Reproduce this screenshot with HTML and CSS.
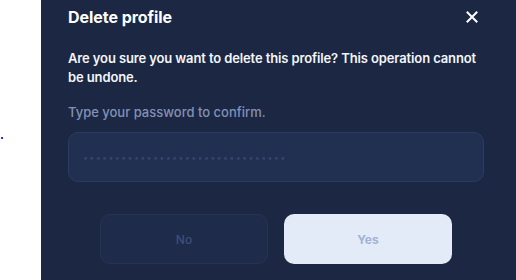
FILE: index.html
```html
<!DOCTYPE html>
<html lang="en">
<head>
<meta charset="utf-8">
<title>Delete profile</title>
<link rel="stylesheet" href="styles.css">
</head>
<body>
<div class="page">
  <div class="side"><span class="dot"></span></div>
  <div class="modal">
    <div class="content">
      <div class="header">
        <h2 class="title">Delete profile</h2>
        <button class="close" aria-label="Close">
          <svg width="12" height="12" viewBox="0 0 12 12"><path d="M1.5 1.5 L10.5 10.5 M10.5 1.5 L1.5 10.5" stroke="#fff" stroke-width="2" stroke-linecap="square"/></svg>
        </button>
      </div>
      <p class="message">Are you sure you want to delete this profile? This operation cannot be undone.</p>
      <p class="hint">Type your password to confirm.</p>
      <div class="input"><input type="password" value="••••••••••••••••••••••••••••••••" disabled></div>
      <div class="actions">
        <button class="btn btn-no">No</button>
        <button class="btn btn-yes">Yes</button>
      </div>
    </div>
  </div>
</div>
</body>
</html>
```

FILE: styles.css
```css
html, body {
  margin: 0;
  padding: 0;
  background: #ffffff;
}
.page {
  display: flex;
  width: 516px;
  height: 280px;
  overflow: hidden;
  font-family: Inter, "Noto Sans", sans-serif;
}
.side {
  width: 41px;
  flex: none;
  background: #ffffff;
  position: relative;
}
.dot {
  position: absolute;
  left: 1px;
  top: 137px;
  width: 2px;
  height: 2px;
  background: #2a2cff;
}
.modal {
  flex: 1;
  background: #1b2743;
}
.content {
  width: 416px;
  margin-left: 27px;
  padding-top: 6px;
}
.header {
  display: flex;
  align-items: center;
  justify-content: space-between;
  height: 22px;
}
.title {
  margin: 0;
  font-size: 16px;
  font-weight: 700;
  color: #ffffff;
  letter-spacing: -0.05px;
}
.close {
  background: none;
  border: 0;
  padding: 0;
  width: 12px;
  height: 12px;
  margin-right: 6px;
  display: flex;
}
.message {
  margin: 21px 0 0;
  font-size: 13px;
  line-height: 19px;
  font-weight: 600;
  color: #f3f5fa;
  letter-spacing: -0.12px;
}
.hint {
  margin: 15px 0 0;
  font-size: 13px;
  line-height: 20px;
  font-weight: 500;
  color: #8391b5;
}
.input {
  margin-top: 10px;
  height: 48px;
  border: 1px solid #2c3b5e;
  border-radius: 10px;
  background: #213051;
  display: flex;
  align-items: center;
  padding: 0 14px;
}
.input input {
  background: transparent;
  border: 0;
  outline: none;
  padding: 0;
  width: 100%;
  font-family: Inter, sans-serif;
  font-size: 9px;
  letter-spacing: 1.3px;
  color: #34456b;
}
.actions {
  display: flex;
  justify-content: center;
  gap: 16px;
  margin-top: 32px;
}
.btn {
  width: 168px;
  height: 50px;
  border-radius: 10px;
  font-family: Inter, sans-serif;
  font-size: 12px;
  font-weight: 600;
}
.btn-no {
  background: #1f2b4a;
  border: 1px solid #26334f;
  color: #3d4f79;
  font-weight: 500;
}
.btn-yes {
  background: #e3eaf8;
  border: 0;
  color: #a2b2d5;
  font-weight: 700;
}
```
